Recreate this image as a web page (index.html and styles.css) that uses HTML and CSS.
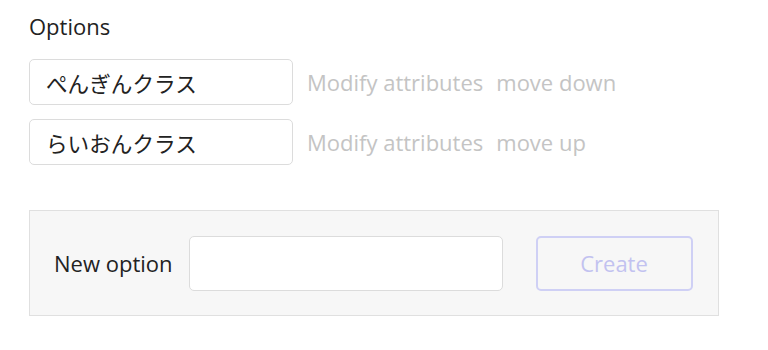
FILE: index.html
```html
<!DOCTYPE html>
<html>
<head>
    <link rel="stylesheet" href="styles.css">
</head>
<body>
    <div class="options">
        <div class="title">Options</div>

        <div class="option-row">
            <input type="text" class="option-input" value="ぺんぎんクラス">
            <span class="action">Modify attributes</span>
            <span class="action">move down</span>
        </div>
        <div class="option-row">
            <input type="text" class="option-input" value="らいおんクラス">
            <span class="action">Modify attributes</span>
            <span class="action">move up</span>
        </div>

        <div class="new-option">
            <label for="newOption">New option</label>
            <input type="text" id="newOption" class="new-input">
            <button class="create" disabled>Create</button>
        </div>
    </div>
</body>
</html>
```

FILE: styles.css
```css
body {
    margin: 0;
    background: white;
    font-family: "Open Sans", "Noto Sans CJK JP", sans-serif;
    color: #222;
}
.options {
    padding: 11px 0 0 29px;
    width: 690px;
}
.title {
    font-size: 22px;
    line-height: 30px;
    margin-bottom: 18px;
}
.option-row {
    display: flex;
    align-items: center;
    margin-bottom: 14px;
}
.option-input {
    box-sizing: border-box;
    width: 264px;
    height: 46px;
    padding: 0 16px;
    border: 1px solid #dcdcdc;
    border-radius: 5px;
    font-family: "Noto Sans CJK JP", sans-serif;
    font-size: 21.6px;
    color: #222;
    margin-right: 14px;
}
.action {
    font-size: 22px;
    color: #c4c4c4;
    margin-right: 13px;
    white-space: nowrap;
}
.new-option {
    box-sizing: border-box;
    margin-top: 45px;
    height: 106px;
    display: flex;
    align-items: center;
    padding: 0 24px;
    background: #f7f7f7;
    border: 1px solid #e0e0e0;
}
.new-option label {
    font-size: 22px;
    color: #222;
    margin-right: 16px;
    white-space: nowrap;
    flex-shrink: 0;
}
.new-input {
    box-sizing: border-box;
    flex-shrink: 0;
    width: 314px;
    height: 55px;
    border: 1px solid #dcdcdc;
    border-radius: 5px;
    background: white;
    margin-right: 33px;
}
.create {
    box-sizing: border-box;
    flex-shrink: 0;
    width: 157px;
    height: 55px;
    border: 2px solid #cfd0f5;
    border-radius: 5px;
    background: transparent;
    color: #c2c2f0;
    font-family: "Open Sans", sans-serif;
    font-size: 22px;
}
```
